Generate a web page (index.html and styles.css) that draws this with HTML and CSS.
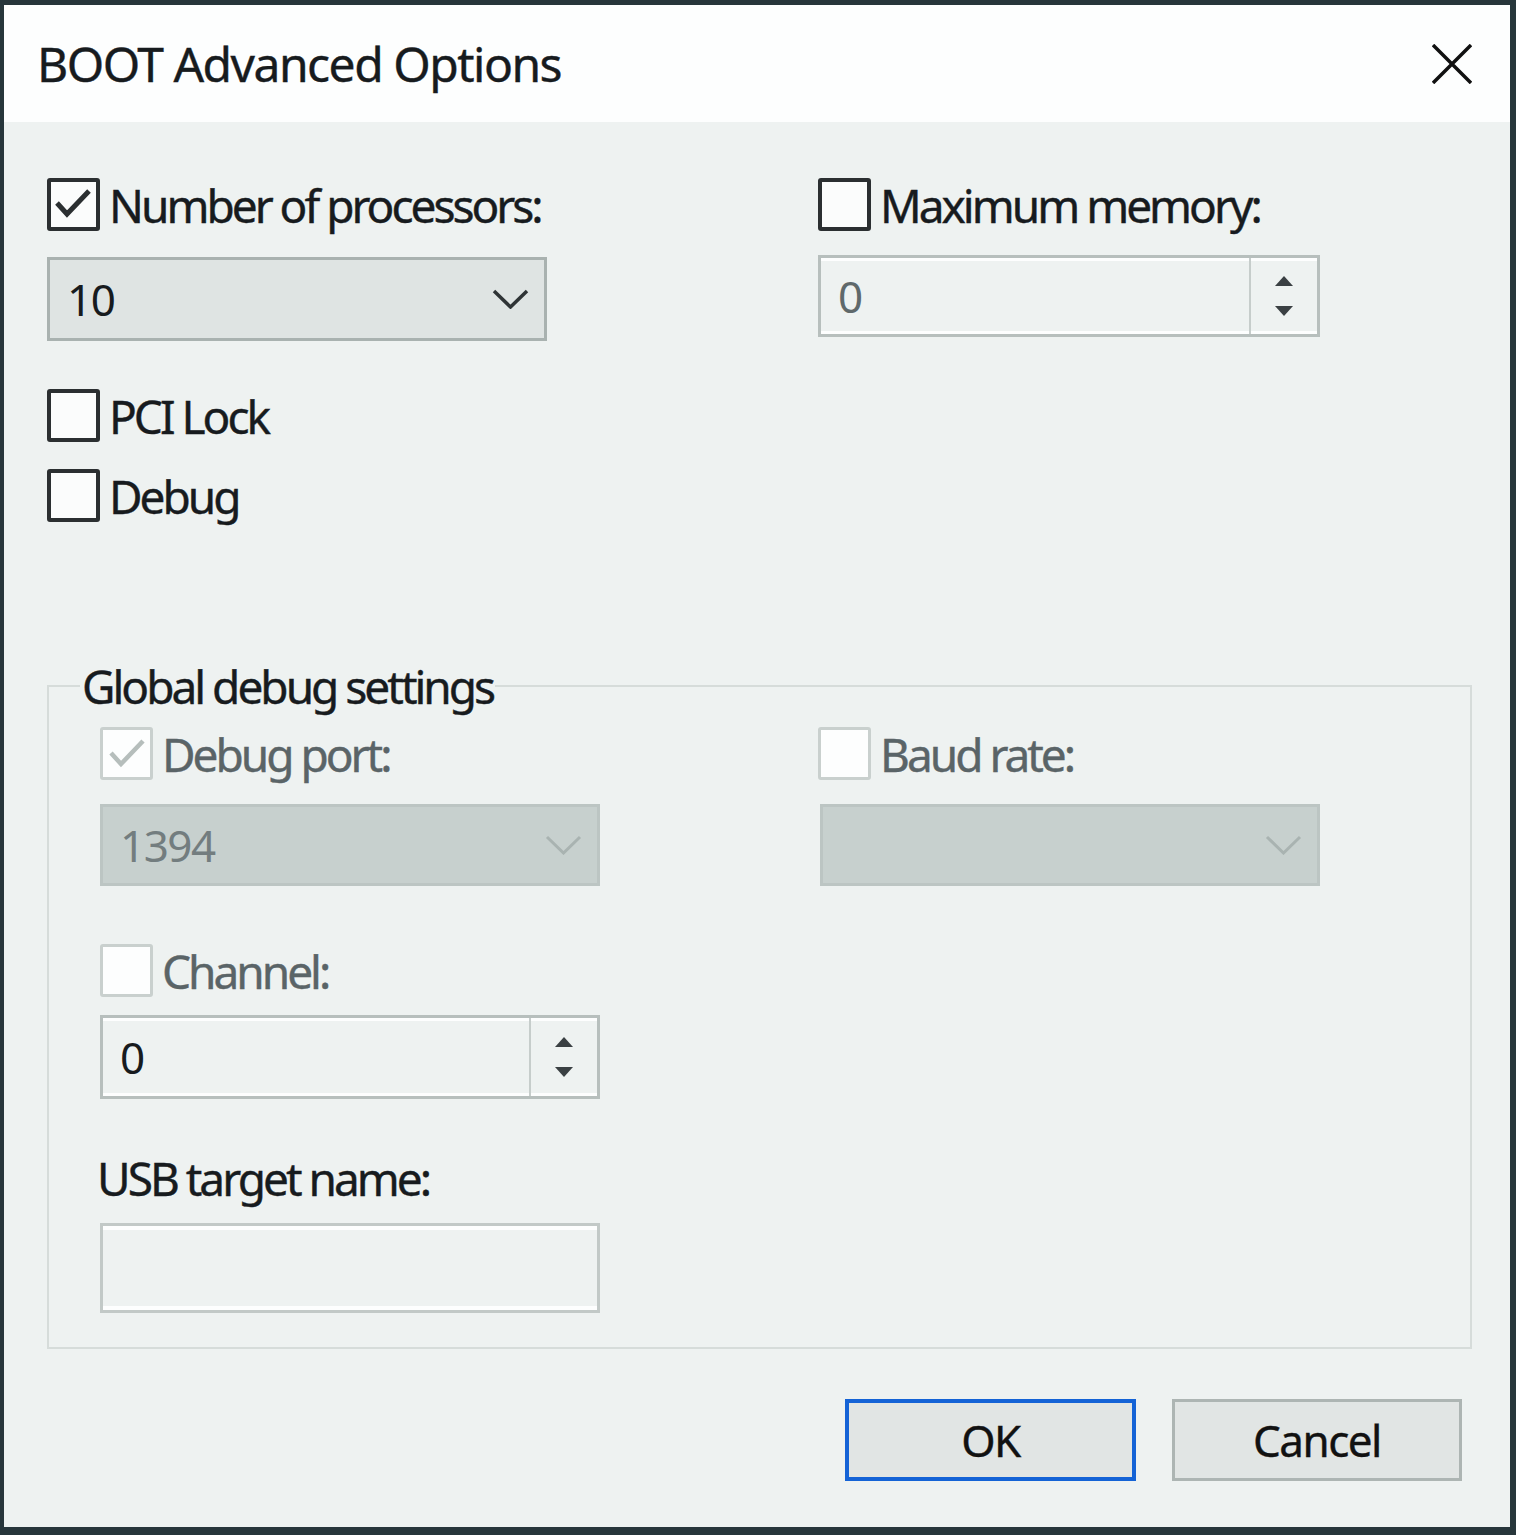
FILE: index.html
```html
<!DOCTYPE html>
<html lang="en">
<head>
  <meta charset="UTF-8" />
  <title>BOOT Advanced Options</title>
  <link rel="stylesheet" href="styles.css">
</head>
<body>
  <div class="window">
    <div class="titlebar">
      <span class="title">BOOT Advanced Options</span>
      <svg class="close" width="40" height="40" viewBox="0 0 40 40">
        <path d="M1 1 L39 39 M39 1 L1 39" stroke="#111" stroke-width="3.5" fill="none"/>
      </svg>
    </div>

    <div class="content">
      <div class="cols">
        <div class="col">
          <div class="check-row">
            <span class="box">
              <svg width="45" height="45" viewBox="0 0 45 45"><polyline points="6,21 16,32 38,9" stroke="#2b2f31" stroke-width="5" fill="none"/></svg>
            </span>
            <span class="lbl">Number of processors:</span>
          </div>
          <div class="select">
            <span class="val">10</span>
            <svg class="chev" width="37" height="20" viewBox="0 0 37 20"><polyline points="2,2 18.5,18 35,2" stroke="#2f3436" stroke-width="3.5" fill="none"/></svg>
          </div>
          <div class="check-row pci">
            <span class="box"></span>
            <span class="lbl">PCI Lock</span>
          </div>
          <div class="check-row dbg">
            <span class="box"></span>
            <span class="lbl">Debug</span>
          </div>
        </div>
        <div class="col">
          <div class="check-row">
            <span class="box"></span>
            <span class="lbl">Maximum memory:</span>
          </div>
          <div class="spin mem">
            <span class="val">0</span>
            <div class="spin-btns">
              <span class="up"></span>
              <span class="down"></span>
            </div>
          </div>
        </div>
      </div>

      <fieldset class="group">
        <legend>Global debug settings</legend>
        <div class="cols group-body">
          <div class="col">
            <div class="check-row off">
              <span class="box">
                <svg width="46" height="46" viewBox="0 0 46 46"><polyline points="7,22 17,33 39,10" stroke="#b6bebc" stroke-width="4.5" fill="none"/></svg>
              </span>
              <span class="lbl">Debug port:</span>
            </div>
            <div class="select off">
              <span class="val">1394</span>
              <svg class="chev" width="37" height="20" viewBox="0 0 37 20"><polyline points="2,2 18.5,18 35,2" stroke="#a9b3b1" stroke-width="3" fill="none"/></svg>
            </div>
            <div class="check-row off channel">
              <span class="box"></span>
              <span class="lbl">Channel:</span>
            </div>
            <div class="spin chan">
              <span class="val">0</span>
              <div class="spin-btns">
                <span class="up"></span>
                <span class="down"></span>
              </div>
            </div>
            <div class="usb-label">USB target name:</div>
            <div class="textbox"></div>
          </div>
          <div class="col right">
            <div class="check-row off">
              <span class="box"></span>
              <span class="lbl">Baud rate:</span>
            </div>
            <div class="select off baud">
              <span class="val"></span>
              <svg class="chev" width="37" height="20" viewBox="0 0 37 20"><polyline points="2,2 18.5,18 35,2" stroke="#a9b3b1" stroke-width="3" fill="none"/></svg>
            </div>
          </div>
        </div>
      </fieldset>

      <div class="buttons">
        <button class="btn ok">OK</button>
        <button class="btn">Cancel</button>
      </div>
    </div>
  </div>
</body>
</html>
```

FILE: styles.css
```css
* {
  box-sizing: border-box;
}

body {
  margin: 0;
  background-color: #27363b;
  font-family: 'Noto Sans', 'Open Sans', sans-serif;
  color: #171b1e;
}

.window {
  height: 1535px;
  border-style: solid;
  border-color: #27363b;
  border-width: 5px 6px 8px 4px;
  background-color: #eef2f1;
  display: flex;
  flex-direction: column;
}

.titlebar {
  height: 117px;
  background-color: #fdfefe;
  display: flex;
  align-items: center;
  justify-content: space-between;
  padding: 0 38px 0 33px;
}

.title {
  font-size: 48px;
  letter-spacing: -1.5px;
  -webkit-text-stroke: 0.4px #171b1e;
}

.content {
  padding: 56px 38px 0 43px;
}

.cols {
  display: grid;
  grid-template-columns: 771px 1fr;
}

/* checkboxes */
.check-row {
  display: flex;
  align-items: center;
  gap: 9px;
  height: 53px;
}

.box {
  width: 53px;
  height: 53px;
  border: 4px solid #2b2f31;
  border-radius: 3px;
  background-color: #fbfcfc;
  display: flex;
  align-items: center;
  justify-content: center;
}

.lbl {
  font-size: 46px;
  letter-spacing: -3px;
  -webkit-text-stroke: 0.4px currentColor;
}

.pci {
  margin-top: 48px;
}

.dbg {
  margin-top: 27px;
}

.off .box {
  border: 3px solid #c9d0ce;
  background-color: #fdfefe;
}

.off .lbl {
  color: #5a6467;
}

/* dropdowns */
.select {
  margin-top: 26px;
  width: 500px;
  height: 84px;
  border: 3px solid #a9b2b0;
  background-color: #dfe4e3;
  display: flex;
  align-items: center;
  justify-content: space-between;
  padding: 0 15px 0 17px;
}

.val {
  font-size: 44px;
  letter-spacing: -1.5px;
}

.select.off {
  margin-top: 24px;
  height: 82px;
  border-color: #bcc5c3;
  background-color: #c7d0ce;
}

.select.off .val {
  color: #737d7f;
}

.select.baud {
  margin-left: 2px;
}

/* spin boxes */
.spin {
  width: 502px;
  height: 82px;
  border: 3px solid #b7bfbd;
  box-shadow: inset 0 3px 0 #fdfefe, inset 0 -3px 0 #fdfefe;
  background-color: #eef2f1;
  display: flex;
  align-items: center;
  justify-content: space-between;
  padding-left: 17px;
}

.spin.mem {
  margin-top: 24px;
}

.spin.mem .val {
  color: #5f696b;
}

.spin.chan {
  margin-top: 18px;
  width: 500px;
  height: 84px;
}

.spin-btns {
  width: 68px;
  height: 100%;
  border-left: 2px solid #c6cdcb;
  display: flex;
  flex-direction: column;
  align-items: center;
  justify-content: center;
  gap: 20px;
}

.up {
  width: 0;
  height: 0;
  border-left: 9px solid transparent;
  border-right: 9px solid transparent;
  border-bottom: 10px solid #3a4043;
}

.down {
  width: 0;
  height: 0;
  border-left: 9px solid transparent;
  border-right: 9px solid transparent;
  border-top: 10px solid #3a4043;
}

/* group box */
.group {
  margin: 134px 0 0 0;
  border: 2px solid #d6dcda;
  padding: 0 0 34px 31px;
}

.group legend {
  font-size: 46px;
  letter-spacing: -3px;
  line-height: 60px;
  padding: 0 2px;
  -webkit-text-stroke: 0.4px #171b1e;
}

.group-body {
  margin-top: 11px;
  margin-left: 20px;
  grid-template-columns: 718px 1fr;
}

.channel {
  margin-top: 58px;
}

.usb-label {
  margin-top: 50px;
  margin-left: -3px;
  font-size: 46px;
  letter-spacing: -3px;
  line-height: 58px;
  -webkit-text-stroke: 0.4px #171b1e;
}

.textbox {
  margin-top: 16px;
  width: 500px;
  height: 90px;
  border: 3px solid #c2c9c7;
  box-shadow: inset 0 4px 0 #fdfefe, inset 0 -4px 0 #fdfefe;
  background-color: #eef2f1;
}

/* buttons */
.buttons {
  display: flex;
  justify-content: flex-end;
  gap: 36px;
  margin: 50px 10px 0 0;
}

.btn {
  width: 290px;
  height: 82px;
  font-family: inherit;
  font-size: 44px;
  letter-spacing: -1.5px;
  color: #111;
  background-color: #e1e5e4;
  border: 3px solid #adb5b3;
  padding: 0;
  -webkit-text-stroke: 0.4px #111;
}

.btn.ok {
  width: 291px;
  border: 4px solid #1463d6;
}
```
